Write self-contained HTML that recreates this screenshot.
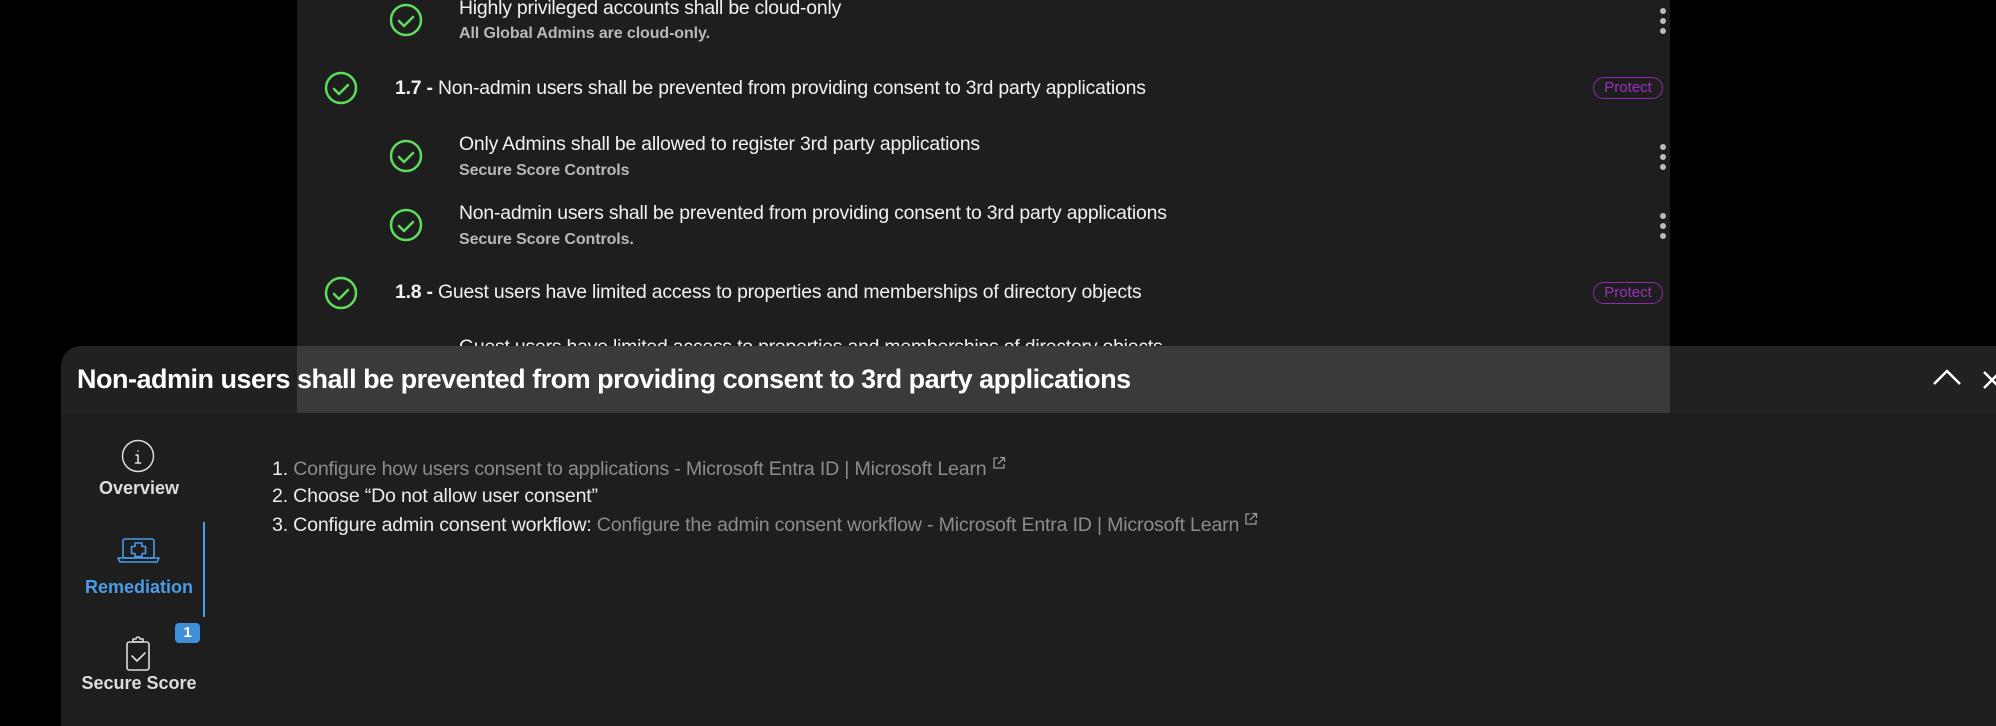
<!DOCTYPE html>
<html><head><meta charset="utf-8"><style>
*{margin:0;padding:0;box-sizing:border-box}
body{width:1996px;height:719px;background:#000;position:relative;overflow:hidden;font-family:"Liberation Sans",Arial,sans-serif}
.a{position:absolute;white-space:nowrap}
.top{position:absolute;left:297px;top:0;width:1373px;height:346px;background:#1e1e1e}
.t{color:#f2f2f2;font-size:19.4px;letter-spacing:-0.2px}
.s{color:#b8b8b8;font-size:16px;font-weight:bold;letter-spacing:-0.1px}
.dots{position:absolute;left:1660px;width:6px}
.dots i{display:block;width:6px;height:6px;border-radius:50%;background:#bbb;margin-bottom:4px}
.badge{position:absolute;left:1593px;width:70px;height:22px;border:1.5px solid #8e2bb0;border-radius:11px;color:#9b30c0;font-size:15px;text-align:center;line-height:19px}
.panel{position:absolute;left:61px;top:346px;width:1940px;height:380px;background:#1e1e1e;border-top-left-radius:20px;overflow:hidden}
.hdr{position:absolute;left:0;top:0;width:100%;height:67px;background:#212121}
.blur{position:absolute;left:236px;top:0;width:1373px;height:67px;background:#3a3a3a}
.nav{color:#ddd;font-size:18px;font-weight:bold;text-align:center;width:156px;left:61px}
.li{color:#ececec;font-size:19.6px;letter-spacing:-0.2px;line-height:24px}
.li span{color:#8c8c8c}
.li svg{vertical-align:5px}
</style></head><body>
<div class="top"></div>
<svg class="a" style="left:0;top:0" width="1996" height="346">
<g fill="none" stroke="#5ddc5d" stroke-width="2.5" stroke-linecap="round" stroke-linejoin="round">
<circle cx="406" cy="20" r="15"/><path d="M399 21l5 5 9-9"/>
<circle cx="341" cy="88" r="15"/><path d="M334 89l5 5 9-9"/>
<circle cx="406" cy="156" r="15"/><path d="M399 157l5 5 9-9"/>
<circle cx="406" cy="225" r="15"/><path d="M399 226l5 5 9-9"/>
<circle cx="341" cy="293" r="15"/><path d="M334 294l5 5 9-9"/>
</g></svg>
<div class="a t" style="left:459px;top:-3px">Highly privileged accounts shall be cloud-only</div>
<div class="a s" style="left:459px;top:25px">All Global Admins are cloud-only.</div>
<div class="a t" style="left:395px;top:77px"><b>1.7 -</b> Non-admin users shall be prevented from providing consent to 3rd party applications</div>
<div class="a t" style="left:459px;top:133px">Only Admins shall be allowed to register 3rd party applications</div>
<div class="a s" style="left:459px;top:162px">Secure Score Controls</div>
<div class="a t" style="left:459px;top:202px">Non-admin users shall be prevented from providing consent to 3rd party applications</div>
<div class="a s" style="left:459px;top:231px">Secure Score Controls.</div>
<div class="a t" style="left:395px;top:281px"><b>1.8 -</b> Guest users have limited access to properties and memberships of directory objects</div>
<div class="a t" style="left:459px;top:336px">Guest users have limited access to properties and memberships of directory objects</div>
<div class="dots" style="top:8px"><i></i><i></i><i></i></div>
<div class="dots" style="top:144px"><i></i><i></i><i></i></div>
<div class="dots" style="top:213px"><i></i><i></i><i></i></div>
<div class="badge" style="top:77px">Protect</div>
<div class="badge" style="top:282px">Protect</div>

<div class="panel">
<div class="hdr"></div>
<div class="blur"></div>
<div class="a" style="left:16px;top:18px;color:#fff;font-size:27px;font-weight:bold;letter-spacing:-0.5px">Non-admin users shall be prevented from providing consent to 3rd party applications</div>
</div>
<svg class="a" style="left:1925px;top:360px" width="71" height="40"><g stroke="#fff" stroke-width="2.5" fill="none"><path d="M9 24l13-13 13 13"/><path d="M59 12l16 16M75 12L59 28"/></g></svg>

<svg class="a" style="left:90px;top:430px" width="130" height="250" fill="none" stroke-linecap="round" stroke-linejoin="round">
<circle cx="48" cy="26" r="15.5" stroke="#ddd" stroke-width="1.5"/>
<path d="M48 21v0M46 25h2v8M45.5 33h5" stroke="#ddd" stroke-width="1.6"/>
<g stroke="#4a9be8" stroke-width="1.6"><rect x="33" y="109" width="31" height="19" rx="2"/><path d="M28 128h41l-2 4H30z"/><path d="M45 113h7v3.5h3.5v7H52v3h-7v-3h-3.5v-7H45z"/></g>
<g stroke="#ddd" stroke-width="1.6"><rect x="37" y="212" width="22" height="28" rx="2.5"/><path d="M43 212v-3h3a2 2 0 014 0h3v3z"/><path d="M42 226l5 5 8-8"/></g>
</svg>
<div class="a nav" style="top:478px">Overview</div>
<div class="a nav" style="top:577px;color:#4a9be8">Remediation</div>
<div class="a nav" style="top:673px">Secure Score</div>
<div class="a" style="left:203px;top:522px;width:2px;height:95px;background:#4a9be8"></div>
<div class="a" style="left:175px;top:623px;width:25px;height:20px;background:#3f8fd8;border-radius:4px;color:#fff;font-size:15px;font-weight:bold;text-align:center;line-height:20px">1</div>

<div class="a li" style="left:272px;top:456px">1. <span>Configure how users consent to applications - Microsoft Entra ID | Microsoft Learn</span> <svg width="14" height="14"><g fill="none" stroke="#999" stroke-width="1.3"><path d="M6 2H2v10h10V8"/><path d="M8 1.5h4.5V6M12.5 1.5L6 8"/></g></svg></div>
<div class="a li" style="left:272px;top:484px">2. Choose “Do not allow user consent”</div>
<div class="a li" style="left:272px;top:512px">3. Configure admin consent workflow: <span>Configure the admin consent workflow - Microsoft Entra ID | Microsoft Learn</span> <svg width="14" height="14"><g fill="none" stroke="#999" stroke-width="1.3"><path d="M6 2H2v10h10V8"/><path d="M8 1.5h4.5V6M12.5 1.5L6 8"/></g></svg></div>
</body></html>
